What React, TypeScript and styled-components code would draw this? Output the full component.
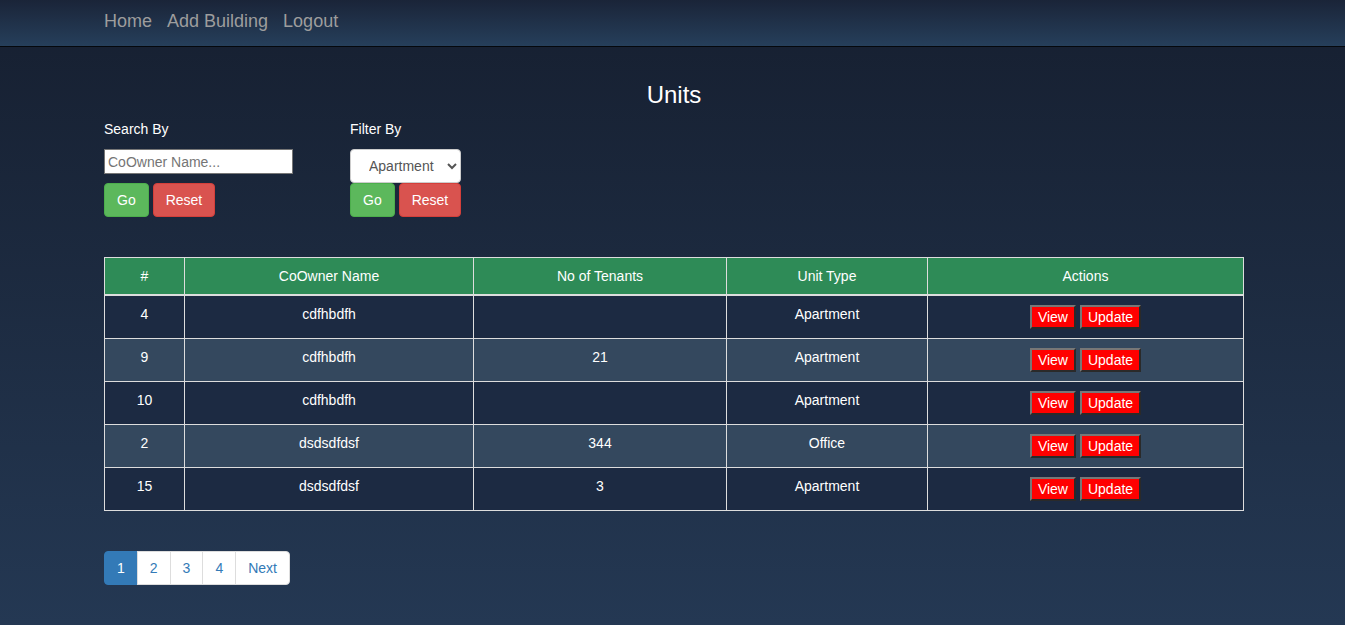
import React from "react";
import styled, { createGlobalStyle } from "styled-components";

type Unit = { id: number; owner: string; tenants: string; type: string };

const units: Unit[] = [
  { id: 4, owner: "cdfhbdfh", tenants: "", type: "Apartment" },
  { id: 9, owner: "cdfhbdfh", tenants: "21", type: "Apartment" },
  { id: 10, owner: "cdfhbdfh", tenants: "", type: "Apartment" },
  { id: 2, owner: "dsdsdfdsf", tenants: "344", type: "Office" },
  { id: 15, owner: "dsdsdfdsf", tenants: "3", type: "Apartment" },
];

const GlobalStyle = createGlobalStyle`
  html, body {
    margin: 0;
    padding: 0;
    min-height: 100%;
  }
  body {
    font-family: "Liberation Sans", Arial, sans-serif;
    font-size: 14px;
    color: #fff;
    background: linear-gradient(to bottom, #161f30 0%, #243853 100%);
    min-height: 625px;
  }
`;

export default function App(): JSX.Element {
  return (
    <>
      <GlobalStyle />
      <Page>
        <NavBar>
          <Container>
            <NavList>
              <NavLink href="#">Home</NavLink>
              <NavLink href="#">Add Building</NavLink>
              <NavLink href="#">Logout</NavLink>
            </NavList>
          </Container>
        </NavBar>

        <Container>
          <Title>Units</Title>

          <Filters>
            <FilterGroup>
              <Label>Search By</Label>
              <TextInput placeholder="CoOwner Name..." />
              <ButtonRow>
                <Btn variant="success">Go</Btn>
                <Btn variant="danger">Reset</Btn>
              </ButtonRow>
            </FilterGroup>
            <FilterGroup>
              <Label>Filter By</Label>
              <Select defaultValue="Apartment">
                <option>Apartment</option>
                <option>Office</option>
              </Select>
              <ButtonRow>
                <Btn variant="success">Go</Btn>
                <Btn variant="danger">Reset</Btn>
              </ButtonRow>
            </FilterGroup>
          </Filters>

          <Table>
            <colgroup>
              <col style={{ width: 80 }} />
              <col style={{ width: 289 }} />
              <col style={{ width: 253 }} />
              <col style={{ width: 201 }} />
              <col />
            </colgroup>
            <thead>
              <tr>
                <Th>#</Th>
                <Th>CoOwner Name</Th>
                <Th>No of Tenants</Th>
                <Th>Unit Type</Th>
                <Th>Actions</Th>
              </tr>
            </thead>
            <tbody>
              {units.map((u, i) => (
                <Row key={u.id} striped={i % 2 === 1}>
                  <Td>{u.id}</Td>
                  <Td>{u.owner}</Td>
                  <Td>{u.tenants}</Td>
                  <Td>{u.type}</Td>
                  <ActionCell>
                    <ActionBtn>View</ActionBtn>
                    <ActionBtn>Update</ActionBtn>
                  </ActionCell>
                </Row>
              ))}
            </tbody>
          </Table>

          <Pagination>
            <PageItem active>1</PageItem>
            <PageItem>2</PageItem>
            <PageItem>3</PageItem>
            <PageItem>4</PageItem>
            <PageItem>Next</PageItem>
          </Pagination>
        </Container>
      </Page>
    </>
  );
}

const Page = styled.div`
  min-height: 625px;
`;

const NavBar = styled.nav`
  height: 46px;
  background: linear-gradient(to bottom, #1a2438 0%, #263f5b 100%);
  border-bottom: 1px solid #05080d;
`;

const Container = styled.div`
  width: 1140px;
  margin-left: calc(50% - 568.5px);
`;

const NavList = styled.div`
  display: flex;
  gap: 15px;
  height: 42px;
  align-items: center;
`;

const NavLink = styled.a`
  color: #9d9d9d;
  font-size: 18px;
  text-decoration: none;
`;

const Title = styled.h2`
  margin: 34px 0 0;
  font-size: 24px;
  font-weight: 400;
  text-align: center;
  line-height: 28px;
`;

const Filters = styled.div`
  display: flex;
  gap: 57px;
  margin-top: 10px;
`;

const FilterGroup = styled.div`
  display: flex;
  flex-direction: column;
  align-items: flex-start;
`;

const Label = styled.label`
  font-size: 14px;
  line-height: 20px;
  margin-bottom: 10px;
`;

const TextInput = styled.input`
  width: 189px;
  height: 25px;
  box-sizing: border-box;
  border: 1px solid #767676;
  border-radius: 0;
  font-family: "Liberation Sans", Arial, sans-serif;
  font-size: 14px;
  padding: 1px 3px;
  margin: 0 0 9px;

  &::placeholder {
    color: #757575;
  }
`;

const Select = styled.select`
  width: 111px;
  height: 34px;
  box-sizing: border-box;
  border: 1px solid #ccc;
  border-radius: 4px;
  background: #fff;
  color: #555;
  font-family: "Liberation Sans", Arial, sans-serif;
  font-size: 14px;
  padding: 0 4px 0 14px;
  margin: 0;
`;

const ButtonRow = styled.div`
  display: flex;
  gap: 4px;
`;

const Btn = styled.button<{ variant: "success" | "danger" }>`
  height: 34px;
  padding: 6px 12px;
  box-sizing: border-box;
  border: 1px solid ${(p) => (p.variant === "success" ? "#4cae4c" : "#d43f3a")};
  border-radius: 4px;
  background: ${(p) => (p.variant === "success" ? "#5cb85c" : "#d9534f")};
  color: #fff;
  font-family: "Liberation Sans", Arial, sans-serif;
  font-size: 14px;
  line-height: 20px;
`;

const Table = styled.table`
  width: 100%;
  margin-top: 40px;
  border-collapse: collapse;
  table-layout: fixed;
`;

const Th = styled.th`
  background: #2e8b57;
  border: 1px solid #ddd;
  border-bottom-width: 2px;
  font-weight: 400;
  padding: 8px;
  height: 37px;
  box-sizing: border-box;
  line-height: 20px;
`;

const Row = styled.tr<{ striped?: boolean }>`
  background: ${(p) => (p.striped ? "#34485e" : "#1c2a42")};
`;

const Td = styled.td`
  border: 1px solid #ddd;
  text-align: center;
  vertical-align: top;
  padding: 8px;
  height: 43px;
  box-sizing: border-box;
  line-height: 20px;
`;

const ActionCell = styled(Td)`
  padding-top: 9px;
  padding-bottom: 7px;
`;

const ActionBtn = styled.button`
  background: #ff0000;
  color: #fff;
  font-family: "Liberation Sans", Arial, sans-serif;
  font-size: 14px;
  line-height: 20px;
  padding: 0 6px;
  margin: 0 2px;
  border: 2px solid;
  border-color: #777 #2a2a2a #2a2a2a #777;
`;

const Pagination = styled.div`
  display: inline-flex;
  margin-top: 40px;
`;

const PageItem = styled.a<{ active?: boolean }>`
  display: block;
  padding: 6px 12px;
  line-height: 20px;
  font-size: 14px;
  color: ${(p) => (p.active ? "#fff" : "#337ab7")};
  background: ${(p) => (p.active ? "#337ab7" : "#fff")};
  border: 1px solid ${(p) => (p.active ? "#337ab7" : "#ddd")};
  margin-left: -1px;
  cursor: pointer;

  &:first-child {
    margin-left: 0;
    border-radius: 4px 0 0 4px;
  }
  &:last-child {
    border-radius: 0 4px 4px 0;
  }
`;
